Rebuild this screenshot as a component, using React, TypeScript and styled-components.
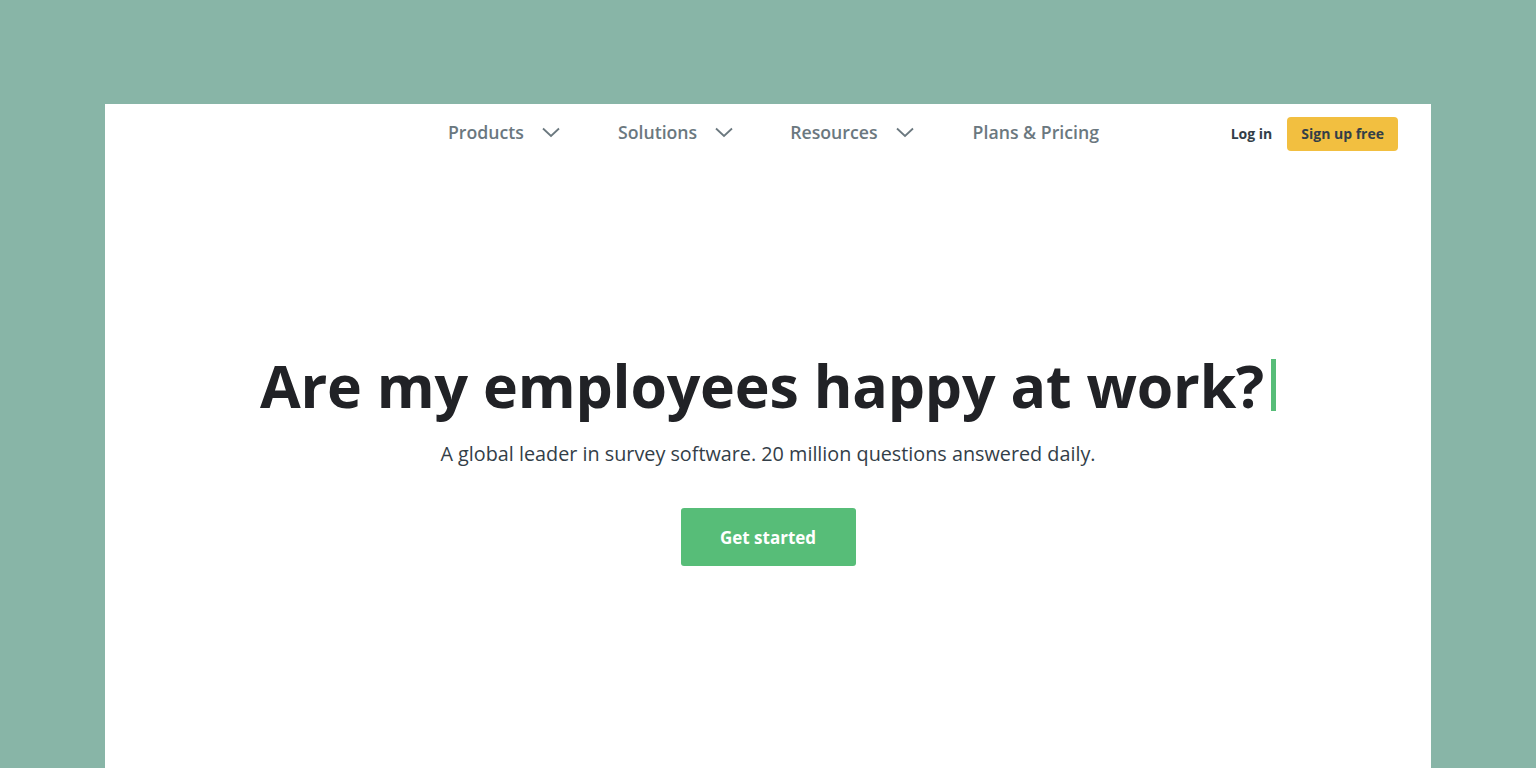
import React from 'react';
import styled, {createGlobalStyle} from "styled-components";

const GlobalStyle = createGlobalStyle`
    html, body {
        margin: 0;
        padding: 0;
        background: #88b5a7;
        font-family: "Open Sans", "Noto Sans", sans-serif;
    }
`;

const Page = styled.div`
    height: 768px;
    overflow: hidden;
    padding: 104px 105px 0 105px;
    box-sizing: border-box;
`;

const Panel = styled.div`
    background: #ffffff;
    height: 664px;
    display: flex;
    flex-direction: column;
`;

const Nav = styled.nav`
    display: flex;
    align-items: center;
    height: 56px;
    padding: 0 33px 0 343px;
`;

const Menu = styled.ul`
    display: flex;
    align-items: center;
    margin: 0;
    padding: 0;
    list-style: none;
    flex: 1;
`;

const MenuItem = styled.li<{gap: number}>`
    display: flex;
    align-items: center;
    gap: 18px;
    margin-right: ${p => p.gap}px;
    font-size: 17.7px;
    font-weight: 600;
    color: #6b787f;
`;

const Actions = styled.div`
    display: flex;
    align-items: center;
    gap: 15px;
    margin-top: 3px;
`;

const LogIn = styled.a`
    font-size: 14px;
    font-weight: 700;
    color: #333e48;
`;

const SignUp = styled.button`
    background: #f2bf40;
    border: none;
    border-radius: 4px;
    height: 34px;
    padding: 0 14px;
    font-family: inherit;
    font-size: 14px;
    font-weight: 700;
    color: #333e48;
`;

const Hero = styled.section`
    display: flex;
    flex-direction: column;
    align-items: center;
    padding-top: 190px;
`;

const Heading = styled.h1`
    display: flex;
    align-items: center;
    margin: 0;
    font-size: 59px;
    font-weight: 700;
    letter-spacing: -0.2px;
    line-height: 70px;
    color: #212226;
`;

const Cursor = styled.span`
    display: inline-block;
    width: 5px;
    height: 52px;
    margin-left: 7px;
    background: #57bd78;
`;

const Sub = styled.p`
    margin: 20px 0 0;
    font-size: 19.8px;
    line-height: 28px;
    font-weight: 400;
    color: #333e48;
`;

const Cta = styled.button`
    margin-top: 40px;
    width: 175px;
    height: 58px;
    border: none;
    border-radius: 3px;
    background: #57bd78;
    color: #ffffff;
    font-family: inherit;
    font-size: 17px;
    font-weight: 700;
`;

function Chevron() {
    return (
        <svg width="18" height="11" viewBox="0 0 18 11" fill="none">
            <path d="M1 1.5 L9 9 L17 1.5" stroke="#6b787f" strokeWidth="1.8" />
        </svg>
    );
}

const menu = [
    {label: "Products", drop: true, gap: 58},
    {label: "Solutions", drop: true, gap: 57},
    {label: "Resources", drop: true, gap: 59},
    {label: "Plans & Pricing", drop: false, gap: 0},
];

export default function App() {
    return (
        <Page>
            <GlobalStyle />
            <Panel>
                <Nav>
                    <Menu>
                        {menu.map(m => (
                            <MenuItem key={m.label} gap={m.gap}>
                                {m.label}
                                {m.drop && <Chevron />}
                            </MenuItem>
                        ))}
                    </Menu>
                    <Actions>
                        <LogIn>Log in</LogIn>
                        <SignUp>Sign up free</SignUp>
                    </Actions>
                </Nav>
                <Hero>
                    <Heading>Are my employees happy at work?<Cursor /></Heading>
                    <Sub>A global leader in survey software. 20 million questions answered daily.</Sub>
                    <Cta>Get started</Cta>
                </Hero>
            </Panel>
        </Page>
    );
}
